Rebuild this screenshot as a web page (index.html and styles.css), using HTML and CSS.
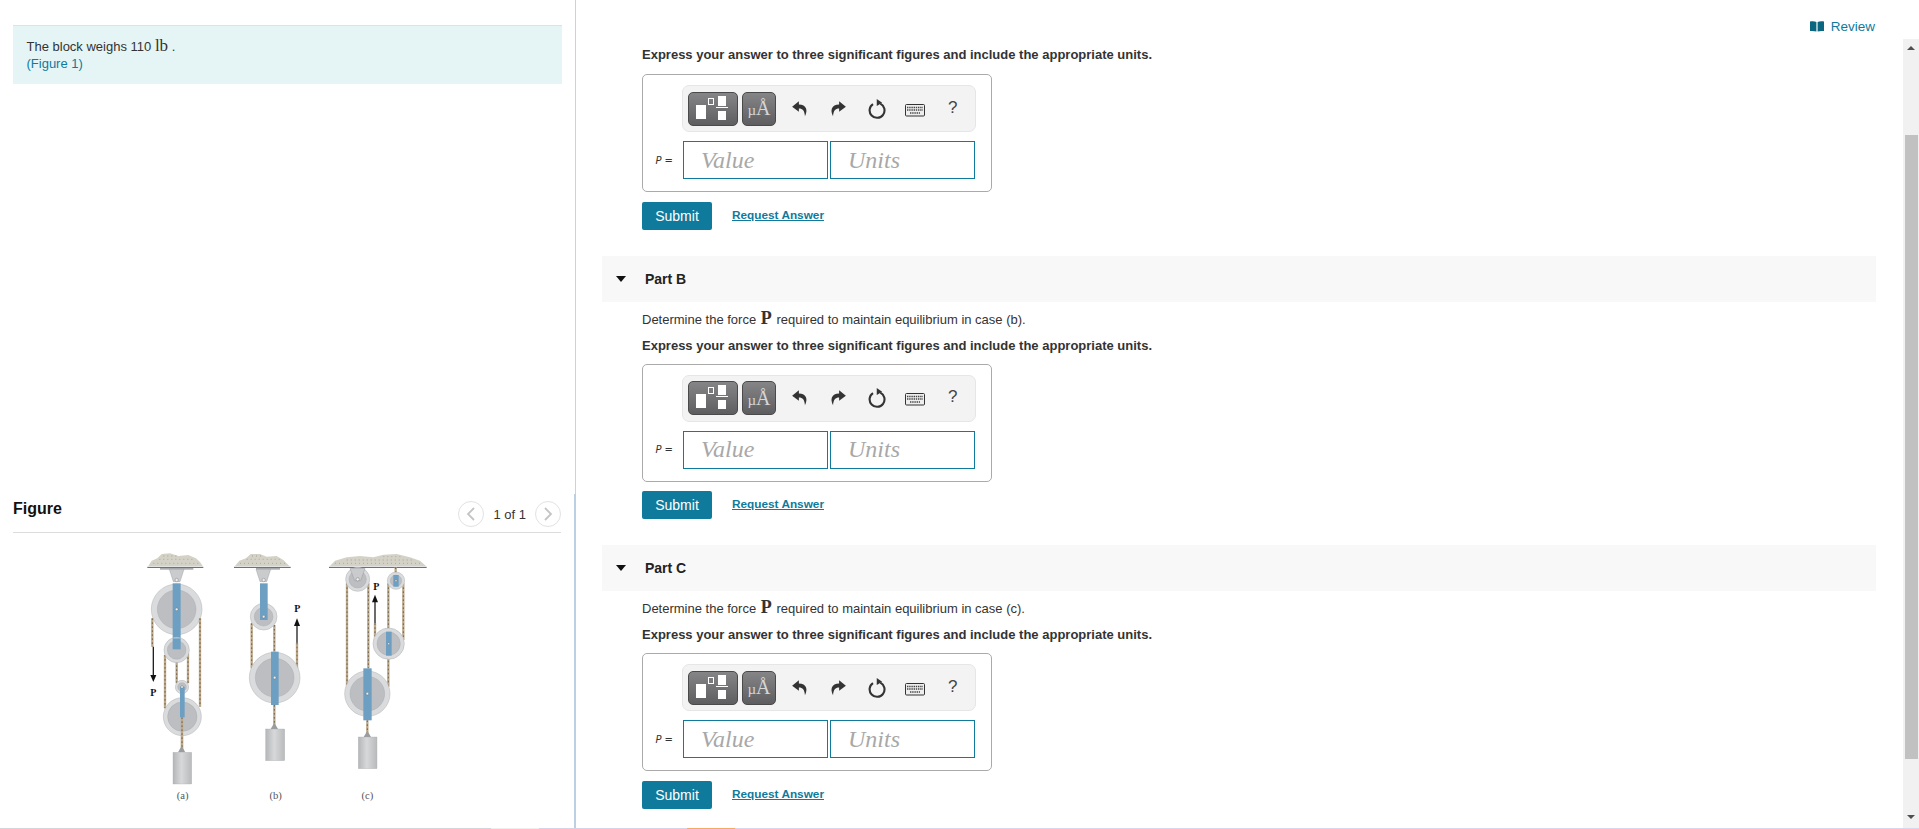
FILE: index.html
```html
<!DOCTYPE html>
<html lang="en">

<head>
    <meta charset="UTF-8">
    <title>Part B - Pulley equilibrium</title>
    <link rel="stylesheet" href="styles.css">
</head>

<body>
    <div class="page">
        <div class="left">
            <div class="intro-pane">
                <div class="intro">
                    <p>The block weighs 110 <span class="math">lb</span> .</p>
                    <p><a href="#">(Figure 1)</a></p>
                </div>
            </div>
            <div class="figure-pane">
                <div class="figure-head">
                    <h3>Figure</h3>
                    <div class="pager">
                        <span class="pager-btn">
                            <svg width="10" height="14" viewBox="0 0 10 14"><path d="M8 1 L2 7 L8 13" /></svg>
                        </span>
                        <span class="pager-text">1 of 1</span>
                        <span class="pager-btn">
                            <svg width="10" height="14" viewBox="0 0 10 14"><path d="M2 1 L8 7 L2 13" /></svg>
                        </span>
                    </div>
                </div>
                <svg class="diagram" width="320" height="289" viewBox="0 0 960 867">
                    <defs>
                        <linearGradient id="metal" x1="0" x2="1" y1="0" y2="0">
                            <stop offset="0" stop-color="#b4b6b8" />
                            <stop offset="0.45" stop-color="#d6d8da" />
                            <stop offset="1" stop-color="#b8babc" />
                        </linearGradient>
                    </defs>

                    <!-- (a) -->
                    <path class="rock" d="M85 78 L95 62 L112 55 L125 42 L150 40 L175 48 L205 45 L228 55 L240 66 L248 78 Z" />
                    <path class="rock-dots" d="M100 70 H236 M118 58 H222 M130 48 H170" />
                    <path class="ceiling" d="M82 82 H250" />
                    <rect class="plate" x="120" y="84" width="100" height="5" />
                    <path class="bracket" d="M148 88 H192 L180 125 H160 Z" />
                    <circle class="rim" cx="170" cy="208" r="76" />
                    <circle class="hub" cx="170" cy="208" r="58" />
                    <path class="rope-a" d="M97 235 V320 M240 235 V500 M135 345 V505 M170 340 V430 M204 340 V430 M186 530 V630" />
                    <path class="rope-b" d="M97 235 V320 M240 235 V500 M135 345 V505 M170 340 V430 M204 340 V430 M186 530 V630" />
                    <rect class="strap" x="158" y="130" width="24" height="185" />
                    <circle class="rim" cx="170" cy="330" r="38" />
                    <circle class="hub" cx="170" cy="330" r="28" />
                    <rect class="strap" x="158" y="295" width="24" height="33" />
                    <circle class="rim" cx="186" cy="441" r="20" />
                    <circle class="hub" cx="186" cy="441" r="13" />
                    <circle class="rim" cx="187" cy="530" r="57" />
                    <circle class="hub" cx="187" cy="530" r="44" />
                    <rect class="strap" x="180" y="440" width="14" height="92" />
                    <path class="rope-a" d="M186 532 V630" />
                    <path class="rope-b" d="M186 532 V630" />
                    <circle class="pin" cx="170" cy="120" r="5" />
                    <circle class="pin" cx="170" cy="208" r="4" />
                    <circle class="pin" cx="186" cy="441" r="4" />
                    <path class="tab" d="M185 618 L196 637 H174 Z" />
                    <rect class="weight" x="159" y="637" width="56" height="95" />
                    <path class="arrow" d="M100 320 V410" />
                    <path class="arrow-head" d="M91 405 H109 L100 426 Z" />
                    <text class="force" x="100" y="467">P</text>

                    <!-- (b) -->
                    <path class="rock" d="M345 78 L358 62 L378 55 L392 42 L420 42 L440 50 L470 48 L490 60 L508 78 Z" />
                    <path class="rock-dots" d="M360 70 H498 M380 58 H480 M396 48 H430" />
                    <path class="ceiling" d="M342 82 H512" />
                    <rect class="plate" x="408" y="84" width="72" height="5" />
                    <path class="bracket" d="M408 88 H452 L440 125 H420 Z" />
                    <path class="rope-a" d="M395 250 V385 M463 255 V335 M531 308 V385 M463 495 V560" />
                    <path class="rope-b" d="M395 250 V385 M463 255 V335 M531 308 V385 M463 495 V560" />
                    <circle class="rim" cx="431" cy="230" r="40" />
                    <circle class="hub" cx="431" cy="230" r="28" />
                    <rect class="strap" x="420" y="130" width="23" height="110" />
                    <circle class="rim" cx="464" cy="413" r="76" />
                    <circle class="hub" cx="464" cy="413" r="58" />
                    <rect class="strap" x="453" y="335" width="23" height="160" />
                    <circle class="pin" cx="431" cy="120" r="5" />
                    <circle class="pin" cx="431" cy="230" r="4" />
                    <circle class="pin" cx="464" cy="413" r="4" />
                    <path class="tab" d="M463 548 L474 567 H452 Z" />
                    <rect class="weight" x="437" y="567" width="57" height="95" />
                    <path class="arrow" d="M531 308 V250" />
                    <path class="arrow-head" d="M522 258 H540 L531 235 Z" />
                    <text class="force" x="532" y="216">P</text>

                    <!-- (c) -->
                    <path class="rock" d="M630 78 L645 62 L680 52 L720 48 L760 52 L790 44 L830 42 L870 52 L900 62 L918 78 Z" />
                    <path class="rock-dots" d="M645 70 H905 M680 60 H880 M790 50 H850" />
                    <path class="ceiling" d="M627 82 H920" />
                    <path class="rope-a" d="M681 130 V435 M745 130 V385 M805 130 V270 M850 130 V300 M765 250 V290 M805 350 V440 M742 541 V585 M827 82 V100" />
                    <path class="rope-b" d="M681 130 V435 M745 130 V385 M805 130 V270 M850 130 V300 M765 250 V290 M805 350 V440 M742 541 V585 M827 82 V100" />
                    <circle class="rim" cx="713" cy="118" r="36" />
                    <circle class="hub" cx="713" cy="118" r="26" />
                    <path class="bracket" d="M690 85 H735 L722 122 H704 Z" />
                    <circle class="pin" cx="713" cy="118" r="5" />
                    <circle class="rim" cx="828" cy="122" r="26" />
                    <circle class="hub" cx="828" cy="122" r="17" />
                    <rect class="strap" x="820" y="105" width="16" height="35" />
                    <circle class="pin" cx="828" cy="122" r="3" />
                    <circle class="rim" cx="806" cy="311" r="47" />
                    <circle class="hub" cx="806" cy="311" r="35" />
                    <rect class="strap" x="798" y="275" width="17" height="72" />
                    <circle class="pin" cx="806" cy="311" r="3" />
                    <circle class="rim" cx="742" cy="461" r="68" />
                    <circle class="hub" cx="742" cy="461" r="52" />
                    <rect class="strap" x="730" y="385" width="25" height="156" />
                    <circle class="pin" cx="742" cy="461" r="4" />
                    <path class="tab" d="M742 572 L753 591 H731 Z" />
                    <rect class="weight" x="715" y="591" width="56" height="95" />
                    <path class="arrow" d="M765 250 V180" />
                    <path class="arrow-head" d="M756 187 H774 L765 164 Z" />
                    <text class="force" x="769" y="149">P</text>

                    <text class="caption" x="188" y="776">(a)</text>
                    <text class="caption" x="467" y="776">(b)</text>
                    <text class="caption" x="742" y="776">(c)</text>
                </svg>
            </div>
        </div>

        <div class="right">
            <div class="topbar">
                <a class="review" href="#">
                    <svg width="14" height="11" viewBox="0 0 14 11">
                        <path d="M0 0.5 C2 0 4.6 0 6.4 1 V10.6 C4.6 9.8 2 9.8 0 10 Z M7.6 1 C9.4 0 12 0 14 0.5 V10 C12 9.8 9.4 9.8 7.6 10.6 Z" />
                    </svg>
                    Review
                </a>
            </div>
            <div class="scroll-area">
                <div class="content">
                    <div class="first-body">
                        <p class="directions">Express your answer to three significant figures and include the appropriate units.</p>
                        <div class="answer">
                            <div class="toolbar">
                                <span class="tool tool-tpl">
                                    <svg width="50" height="34" viewBox="0 0 50 34">
                                        <rect class="tpl-fill" x="8" y="13" width="10" height="14" />
                                        <rect class="tpl-line" x="20.5" y="6.5" width="5" height="6" />
                                        <rect class="tpl-fill" x="30" y="4" width="8" height="10" />
                                        <rect class="tpl-fill" x="28" y="15" width="12" height="1" />
                                        <rect class="tpl-fill" x="30" y="19" width="8" height="9" />
                                    </svg>
                                </span>
                                <span class="tool tool-unit"><i>µ</i>Å</span>
                                <svg class="ico ico-undo" width="18" height="18" viewBox="0 0 16 16"><path d="M7 1 L1 6 L7 10.5 V7.6 C10.4 7.6 12 9.6 12.4 14.4 C15.2 9 13.8 4.2 7 4 Z" /></svg>
                                <svg class="ico ico-redo" width="18" height="18" viewBox="0 0 16 16"><path d="M9 1 L15 6 L9 10.5 V7.6 C5.6 7.6 4 9.6 3.6 14.4 C.8 9 2.2 4.2 9 4 Z" /></svg>
                                <svg class="ico ico-reset" width="20" height="20" viewBox="0 0 18 18"><path class="reset-arc" d="M5.4 4.6 A6.7 6.7 0 1 0 12 4.2" /><path d="M8.8 0 L13.6 3.4 L8.8 6.4 Z" /></svg>
                                <svg class="ico ico-keys" width="20" height="13" viewBox="0 0 20 13">
                                    <rect class="key-case" x="0.5" y="0.5" width="19" height="11.5" rx="1" />
                                    <path class="key-rows" d="M2 3.5 H18 M2 6 H18 M5 9 H15" />
                                </svg>
                                <span class="help">?</span>
                            </div>
                            <label class="var"><i>P</i> =</label>
                            <div class="inputs">
                                <input class="field" type="text" placeholder="Value">
                                <input class="field" type="text" placeholder="Units">
                            </div>
                        </div>
                        <div class="actions">
                            <button class="submit">Submit</button>
                            <a class="request" href="#">Request Answer</a>
                        </div>
                    </div>

                    <div class="part-head"><span class="caret"></span><span>Part B</span></div>
                    <div class="part-body">
                        <p class="prompt">Determine the force <b class="math">P</b> required to maintain equilibrium in case (b).</p>
                        <p class="directions">Express your answer to three significant figures and include the appropriate units.</p>
                        <div class="answer">
                            <div class="toolbar">
                                <span class="tool tool-tpl">
                                    <svg width="50" height="34" viewBox="0 0 50 34">
                                        <rect class="tpl-fill" x="8" y="13" width="10" height="14" />
                                        <rect class="tpl-line" x="20.5" y="6.5" width="5" height="6" />
                                        <rect class="tpl-fill" x="30" y="4" width="8" height="10" />
                                        <rect class="tpl-fill" x="28" y="15" width="12" height="1" />
                                        <rect class="tpl-fill" x="30" y="19" width="8" height="9" />
                                    </svg>
                                </span>
                                <span class="tool tool-unit"><i>µ</i>Å</span>
                                <svg class="ico ico-undo" width="18" height="18" viewBox="0 0 16 16"><path d="M7 1 L1 6 L7 10.5 V7.6 C10.4 7.6 12 9.6 12.4 14.4 C15.2 9 13.8 4.2 7 4 Z" /></svg>
                                <svg class="ico ico-redo" width="18" height="18" viewBox="0 0 16 16"><path d="M9 1 L15 6 L9 10.5 V7.6 C5.6 7.6 4 9.6 3.6 14.4 C.8 9 2.2 4.2 9 4 Z" /></svg>
                                <svg class="ico ico-reset" width="20" height="20" viewBox="0 0 18 18"><path class="reset-arc" d="M5.4 4.6 A6.7 6.7 0 1 0 12 4.2" /><path d="M8.8 0 L13.6 3.4 L8.8 6.4 Z" /></svg>
                                <svg class="ico ico-keys" width="20" height="13" viewBox="0 0 20 13">
                                    <rect class="key-case" x="0.5" y="0.5" width="19" height="11.5" rx="1" />
                                    <path class="key-rows" d="M2 3.5 H18 M2 6 H18 M5 9 H15" />
                                </svg>
                                <span class="help">?</span>
                            </div>
                            <label class="var"><i>P</i> =</label>
                            <div class="inputs">
                                <input class="field" type="text" placeholder="Value">
                                <input class="field" type="text" placeholder="Units">
                            </div>
                        </div>
                        <div class="actions">
                            <button class="submit">Submit</button>
                            <a class="request" href="#">Request Answer</a>
                        </div>
                    </div>

                    <div class="part-head"><span class="caret"></span><span>Part C</span></div>
                    <div class="part-body">
                        <p class="prompt">Determine the force <b class="math">P</b> required to maintain equilibrium in case (c).</p>
                        <p class="directions">Express your answer to three significant figures and include the appropriate units.</p>
                        <div class="answer">
                            <div class="toolbar">
                                <span class="tool tool-tpl">
                                    <svg width="50" height="34" viewBox="0 0 50 34">
                                        <rect class="tpl-fill" x="8" y="13" width="10" height="14" />
                                        <rect class="tpl-line" x="20.5" y="6.5" width="5" height="6" />
                                        <rect class="tpl-fill" x="30" y="4" width="8" height="10" />
                                        <rect class="tpl-fill" x="28" y="15" width="12" height="1" />
                                        <rect class="tpl-fill" x="30" y="19" width="8" height="9" />
                                    </svg>
                                </span>
                                <span class="tool tool-unit"><i>µ</i>Å</span>
                                <svg class="ico ico-undo" width="18" height="18" viewBox="0 0 16 16"><path d="M7 1 L1 6 L7 10.5 V7.6 C10.4 7.6 12 9.6 12.4 14.4 C15.2 9 13.8 4.2 7 4 Z" /></svg>
                                <svg class="ico ico-redo" width="18" height="18" viewBox="0 0 16 16"><path d="M9 1 L15 6 L9 10.5 V7.6 C5.6 7.6 4 9.6 3.6 14.4 C.8 9 2.2 4.2 9 4 Z" /></svg>
                                <svg class="ico ico-reset" width="20" height="20" viewBox="0 0 18 18"><path class="reset-arc" d="M5.4 4.6 A6.7 6.7 0 1 0 12 4.2" /><path d="M8.8 0 L13.6 3.4 L8.8 6.4 Z" /></svg>
                                <svg class="ico ico-keys" width="20" height="13" viewBox="0 0 20 13">
                                    <rect class="key-case" x="0.5" y="0.5" width="19" height="11.5" rx="1" />
                                    <path class="key-rows" d="M2 3.5 H18 M2 6 H18 M5 9 H15" />
                                </svg>
                                <span class="help">?</span>
                            </div>
                            <label class="var"><i>P</i> =</label>
                            <div class="inputs">
                                <input class="field" type="text" placeholder="Value">
                                <input class="field" type="text" placeholder="Units">
                            </div>
                        </div>
                        <div class="actions">
                            <button class="submit">Submit</button>
                            <a class="request" href="#">Request Answer</a>
                        </div>
                    </div>
                </div>
                <div class="scrollbar">
                    <span class="arrow-up"></span>
                    <span class="thumb"></span>
                    <span class="arrow-down"></span>
                </div>
            </div>
        </div>
    </div>
    <div class="strip">
        <span class="strip-a"></span>
        <span class="strip-b"></span>
        <span class="strip-c"></span>
        <span class="strip-d"></span>
        <span class="strip-e"></span>
    </div>
</body>

</html>
```

FILE: styles.css
```css
body {
    margin: 0;
    height: 829px;
    overflow: hidden;
    font-family: "Liberation Sans", Arial, sans-serif;
    font-size: 13px;
    color: #333;
    background: #fff;
}

p {
    margin: 0;
}

a {
    color: #0f7a9c;
    text-decoration: none;
}

.page {
    display: flex;
    height: 828px;
}

.strip {
    display: flex;
    height: 1px;
}
.strip-a { width: 491px; background: #d3d3da; }
.strip-b { width: 48px; background: #eeeeee; }
.strip-c { width: 148px; background: #d4d4e6; }
.strip-d { width: 48px; background: #f5a963; }
.strip-e { flex: 1; background: #d4d8ea; }

/* left column */
.left {
    width: 576px;
    flex: none;
    display: flex;
    flex-direction: column;
}

.intro-pane {
    height: 494px;
    padding: 25px 13px 0 13px;
    box-sizing: border-box;
    border-right: 1px solid #c4d4e6;
}

.intro {
    width: 549px;
    height: 59px;
    box-sizing: border-box;
    padding: 12px 13.5px;
    background: #e5f5f6;
    border-top: 1px solid #d8e4e5;
    line-height: 17px;
}

.math {
    font-family: "Liberation Serif", serif;
    font-size: 17px;
    line-height: 0;
}

.figure-pane {
    flex: 1;
    min-height: 0;
    overflow: hidden;
    border-right: 2px solid #bccfe3;
    padding-left: 13px;
}

.figure-head {
    width: 548px;
    height: 37px;
    padding-top: 1px;
    display: flex;
    justify-content: space-between;
    border-bottom: 1px solid #dcdcdc;
}

.figure-head h3 {
    margin: 5px 0 0;
    font-size: 16px;
    line-height: 18px;
    color: #111;
}

.pager {
    display: flex;
    align-items: center;
    gap: 9px;
    height: 26px;
    margin-top: 6px;
    font-size: 13px;
}

.pager-btn {
    width: 24px;
    height: 24px;
    border: 1px solid #e2e2e2;
    border-radius: 50%;
    display: flex;
    align-items: center;
    justify-content: center;
}

.pager-btn path {
    fill: none;
    stroke: #c4c4c4;
    stroke-width: 1.8;
}

.diagram {
    display: block;
    margin: 7px 0 0 107px;
}

.rock { fill: #d4d2c6; }
.rock-dots { stroke: #b3b1a3; stroke-width: 4; stroke-dasharray: 3 9; fill: none; }
.ceiling { stroke: #555; stroke-width: 3; fill: none; }
.plate { fill: #a9abad; }
.bracket { fill: #c9cbcd; stroke: #85878a; stroke-width: 1; }
.rim { fill: #d9dbdd; stroke: #aeb0b3; stroke-width: 1.5; }
.hub { fill: #bcbec1; stroke: #a0a2a5; stroke-width: 1; }
.strap { fill: #6d9fc2; }
.pin { fill: #eee; stroke: #555; stroke-width: 1; }
.rope-a { stroke: #bda888; stroke-width: 7; fill: none; }
.rope-b { stroke: #6f6353; stroke-width: 3; stroke-dasharray: 5 7; fill: none; }
.tab { fill: #9a9c9e; }
.weight { fill: url(#metal); stroke: #a7a9ab; stroke-width: 1; }
.arrow { stroke: #222; stroke-width: 4; fill: none; }
.arrow-head { fill: #111; }
.force {
    font-family: "Liberation Serif", serif;
    font-weight: bold;
    font-size: 30px;
    fill: #111;
    text-anchor: middle;
}
.caption {
    font-family: "Liberation Serif", serif;
    font-size: 32px;
    fill: #555;
    text-anchor: middle;
}

/* right column */
.right {
    flex: 1;
    min-width: 0;
    display: flex;
    flex-direction: column;
}

.topbar {
    height: 39px;
    flex: none;
    display: flex;
    justify-content: flex-end;
    padding-right: 44px;
}

.review {
    display: flex;
    align-items: center;
    gap: 7px;
    height: 52px;
    font-size: 13.5px;
}

.review svg {
    fill: #0d6680;
}

.scroll-area {
    flex: 1;
    min-height: 0;
    display: flex;
}

.content {
    flex: 1;
    min-width: 0;
    overflow: hidden;
    padding: 8px 27px 0 26px;
}

.first-body {
    padding-left: 40px;
    margin-bottom: 26px;
}

.first-body .answer {
    margin-top: 11px;
}

.part-body {
    padding: 10px 0 0 40px;
    margin-bottom: 26.4px;
}

.part-head {
    height: 46px;
    display: flex;
    align-items: center;
    background: #f8f8f8;
    padding-left: 14px;
    font-size: 14px;
    font-weight: bold;
    color: #222;
}

.caret {
    width: 0;
    height: 0;
    margin-right: 19px;
    border-left: 5px solid transparent;
    border-right: 5px solid transparent;
    border-top: 6px solid #111;
}

.prompt {
    line-height: 16px;
    margin-bottom: 10px;
}

.prompt .math {
    font-size: 18px;
    margin: 0 1px;
}

.directions {
    line-height: 16px;
    font-weight: bold;
}

.answer {
    width: 350px;
    height: 118px;
    box-sizing: border-box;
    margin-top: 10px;
    border: 1px solid #aaa;
    border-radius: 5px;
    padding-top: 10px;
    display: grid;
    grid-template-columns: 39px 294px;
    grid-template-rows: 47px 38px;
    row-gap: 9px;
}

.toolbar {
    grid-column: 2;
    display: flex;
    align-items: center;
    box-sizing: border-box;
    background: #f3f3f3;
    border: 1px solid #e6e6e6;
    border-radius: 7px;
    padding-left: 5px;
}

.tool {
    display: flex;
    align-items: center;
    justify-content: center;
    box-sizing: border-box;
    height: 34px;
    border: 1px solid #4a4a4a;
    border-radius: 5px;
    background: linear-gradient(#858588, #5e5e60);
}

.tool svg {
    display: block;
    flex: none;
}

.tool-tpl {
    width: 50px;
    margin-right: 4px;
}

.tool-unit {
    width: 34px;
    font-family: "Liberation Serif", serif;
    font-size: 20px;
    color: #d6d6d6;
}

.tool-unit i {
    font-style: normal;
    font-size: 15px;
    padding-top: 4px;
}

.tpl-fill { fill: #fff; }
.tpl-line { fill: none; stroke: #fff; stroke-width: 1; }

.ico {
    flex: none;
    fill: #333;
}

.ico-undo { margin-left: 15px; }
.ico-redo { margin-left: 20px; }
.ico-reset { margin-left: 20px; }
.ico-keys { margin-left: 18px; margin-top: 3px; }
.reset-arc { fill: none; stroke: #333; stroke-width: 1.9; }
.key-case { fill: #eee; stroke: #333; }
.key-rows { stroke: #444; stroke-width: 1.5; stroke-dasharray: 1.4 .8; fill: none; }

.help {
    margin-left: 23px;
    margin-top: -2px;
    font-size: 17px;
    color: #444;
}

.var {
    grid-row: 2;
    grid-column: 1;
    align-self: center;
    justify-self: end;
    padding-right: 9px;
    font-family: "DejaVu Sans", sans-serif;
    font-size: 10px;
    color: #333;
}

.inputs {
    grid-row: 2;
    grid-column: 2;
    display: flex;
    gap: 2px;
    padding-left: 1px;
}

.field {
    width: 145px;
    height: 38px;
    box-sizing: border-box;
    border: 1px solid #0f7a9c;
    padding: 0 0 0 17px;
    outline: none;
    font-family: "Liberation Serif", serif;
    font-style: italic;
    font-size: 24px;
    color: #333;
}

.field::placeholder {
    color: #a8a8a8;
    opacity: 1;
}

.actions {
    display: flex;
    align-items: center;
    margin-top: 9.5px;
    gap: 20px;
}

.submit {
    width: 70px;
    height: 28px;
    padding: 0;
    border: none;
    border-radius: 2px;
    background: #0f7a9c;
    color: #fff;
    font-family: inherit;
    font-size: 14px;
    cursor: pointer;
}

.request {
    margin-top: -2px;
    font-size: 11.8px;
    font-weight: bold;
    text-decoration: underline;
}

/* hand drawn scrollbar, the page itself doesn't scroll */
.scrollbar {
    width: 16px;
    flex: none;
    display: flex;
    flex-direction: column;
    align-items: center;
    background: #f1f1f1;
}

.arrow-up {
    margin-top: 7px;
    border-left: 4px solid transparent;
    border-right: 4px solid transparent;
    border-bottom: 4px solid #505050;
}

.thumb {
    width: 13px;
    height: 624px;
    margin-top: 85px;
    background: #c1c1c1;
}

.arrow-down {
    margin-top: 56px;
    border-left: 4px solid transparent;
    border-right: 4px solid transparent;
    border-top: 4px solid #505050;
}
```
